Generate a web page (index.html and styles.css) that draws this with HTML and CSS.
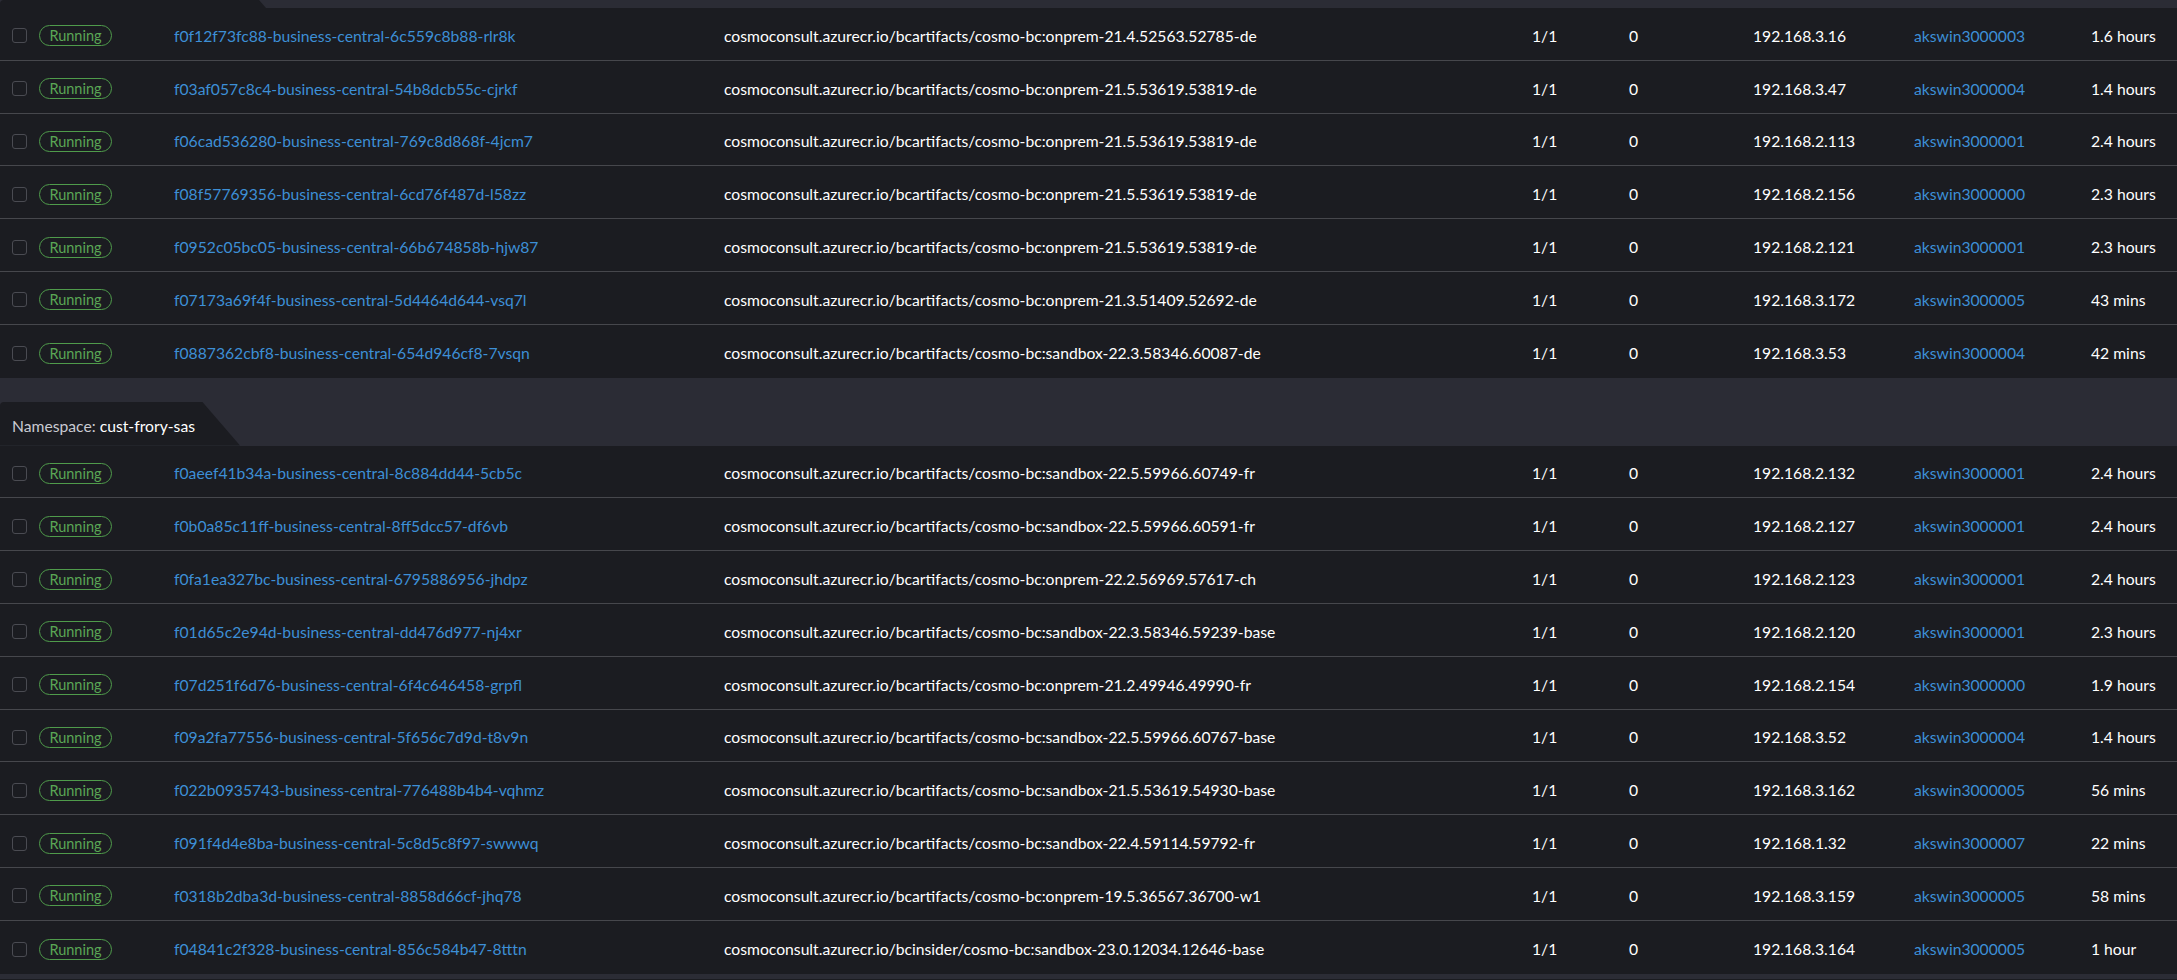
FILE: index.html
```html
<!DOCTYPE html>
<html>
<head>
<meta charset="utf-8">
<link rel="stylesheet" href="styles.css">
</head>
<body>
<div class="table">
  <div class="group-head group-head--cut"><div class="ns-tab ns-tab--cut"></div></div>
  <div id="g1"></div>
  <div class="group-head"><div class="ns-tab"><span class="ns-label">Namespace:</span>&nbsp;<span class="ns-value">cust-frory-sas</span></div></div>
  <div id="g2"></div>
  <div class="table-foot"></div>
</div>
<script src="app.js"></script>
</body>
</html>
```
FILE: styles.css
```css
html, body {
  margin: 0;
  padding: 0;
  background: #1b1c21;
}
body {
  font-family: Lato, "Noto Sans", sans-serif;
  font-size: 15.7px;
  color: #ffffff;
  width: 2177px;
  height: 980px;
  overflow: hidden;
}
.table {
  display: flex;
  flex-direction: column;
}
.group-head {
  background: #2b2c35;
  padding-top: 24px;
  display: flex;
}
.group-head--cut {
  padding-top: 0;
  height: 8px;
}
.ns-tab {
  height: 44px;
  width: 240px;
  background: #1b1c21;
  clip-path: polygon(0 0, 202px 0, 240px 100%, 0 100%);
  border-top-left-radius: 4px;
  display: flex;
  align-items: center;
  padding-left: 12px;
  padding-top: 4px;
  box-sizing: border-box;
  font-size: 15.7px;
}
.ns-tab--cut {
  height: 8px;
  width: 266px;
  padding-top: 0;
  clip-path: polygon(0 0, 259px 0, 266px 100%, 0 100%);
}
.ns-label { color: #c9cad2; }
.ns-value { color: #ffffff; }
.row {
  height: 52.8px;
  box-sizing: border-box;
  border-bottom: 1px solid #46474c;
  display: grid;
  grid-template-columns: 27px 135px 550px 808px 97px 124px 161px 177px 1fr;
  align-items: center;
  padding-left: 12px;
  padding-top: 4px;
  white-space: nowrap;
}
.row:last-child { border-bottom: none; }
.cb {
  width: 15px;
  height: 15px;
  box-sizing: border-box;
  border: 1px solid #4a4b52;
  border-radius: 3px;
  background: #1b1c21;
}
.badge {
  display: inline-flex;
  align-items: center;
  justify-content: center;
  width: 73px;
  height: 21px;
  box-sizing: border-box;
  border: 1px solid #4f9b4b;
  border-radius: 11px;
  color: #5aa655;
  font-size: 14.5px;
}
.link { color: #3d8fd6; }
.node { color: #3d8fd6; }
.table-foot {
  flex: 1;
  min-height: 5px;
  background: #2b2c35;
}
```
FILE: app.js
```js
const img = "cosmoconsult.azurecr.io/bcartifacts/cosmo-bc:";
const g1 = [
  ["f0f12f73fc88-business-central-6c559c8b88-rlr8k", img + "onprem-21.4.52563.52785-de", "192.168.3.16", "akswin3000003", "1.6 hours"],
  ["f03af057c8c4-business-central-54b8dcb55c-cjrkf", img + "onprem-21.5.53619.53819-de", "192.168.3.47", "akswin3000004", "1.4 hours"],
  ["f06cad536280-business-central-769c8d868f-4jcm7", img + "onprem-21.5.53619.53819-de", "192.168.2.113", "akswin3000001", "2.4 hours"],
  ["f08f57769356-business-central-6cd76f487d-l58zz", img + "onprem-21.5.53619.53819-de", "192.168.2.156", "akswin3000000", "2.3 hours"],
  ["f0952c05bc05-business-central-66b674858b-hjw87", img + "onprem-21.5.53619.53819-de", "192.168.2.121", "akswin3000001", "2.3 hours"],
  ["f07173a69f4f-business-central-5d4464d644-vsq7l", img + "onprem-21.3.51409.52692-de", "192.168.3.172", "akswin3000005", "43 mins"],
  ["f0887362cbf8-business-central-654d946cf8-7vsqn", img + "sandbox-22.3.58346.60087-de", "192.168.3.53", "akswin3000004", "42 mins"]
];
const g2 = [
  ["f0aeef41b34a-business-central-8c884dd44-5cb5c", img + "sandbox-22.5.59966.60749-fr", "192.168.2.132", "akswin3000001", "2.4 hours"],
  ["f0b0a85c11ff-business-central-8ff5dcc57-df6vb", img + "sandbox-22.5.59966.60591-fr", "192.168.2.127", "akswin3000001", "2.4 hours"],
  ["f0fa1ea327bc-business-central-6795886956-jhdpz", img + "onprem-22.2.56969.57617-ch", "192.168.2.123", "akswin3000001", "2.4 hours"],
  ["f01d65c2e94d-business-central-dd476d977-nj4xr", img + "sandbox-22.3.58346.59239-base", "192.168.2.120", "akswin3000001", "2.3 hours"],
  ["f07d251f6d76-business-central-6f4c646458-grpfl", img + "onprem-21.2.49946.49990-fr", "192.168.2.154", "akswin3000000", "1.9 hours"],
  ["f09a2fa77556-business-central-5f656c7d9d-t8v9n", img + "sandbox-22.5.59966.60767-base", "192.168.3.52", "akswin3000004", "1.4 hours"],
  ["f022b0935743-business-central-776488b4b4-vqhmz", img + "sandbox-21.5.53619.54930-base", "192.168.3.162", "akswin3000005", "56 mins"],
  ["f091f4d4e8ba-business-central-5c8d5c8f97-swwwq", img + "sandbox-22.4.59114.59792-fr", "192.168.1.32", "akswin3000007", "22 mins"],
  ["f0318b2dba3d-business-central-8858d66cf-jhq78", img + "onprem-19.5.36567.36700-w1", "192.168.3.159", "akswin3000005", "58 mins"],
  ["f04841c2f328-business-central-856c584b47-8tttn", "cosmoconsult.azurecr.io/bcinsider/cosmo-bc:sandbox-23.0.12034.12646-base", "192.168.3.164", "akswin3000005", "1 hour"]
];
function fill(id, rows) {
  const host = document.getElementById(id);
  rows.forEach(r => {
    const row = document.createElement("div");
    row.className = "row";
    row.innerHTML =
      '<div><div class="cb"></div></div>' +
      '<div><span class="badge">Running</span></div>' +
      '<div><span class="link">' + r[0] + '</span></div>' +
      '<div>' + r[1] + '</div>' +
      '<div>1/1</div>' +
      '<div>0</div>' +
      '<div>' + r[2] + '</div>' +
      '<div><span class="node">' + r[3] + '</span></div>' +
      '<div>' + r[4] + '</div>';
    host.appendChild(row);
  });
}
fill("g1", g1);
fill("g2", g2);
```
